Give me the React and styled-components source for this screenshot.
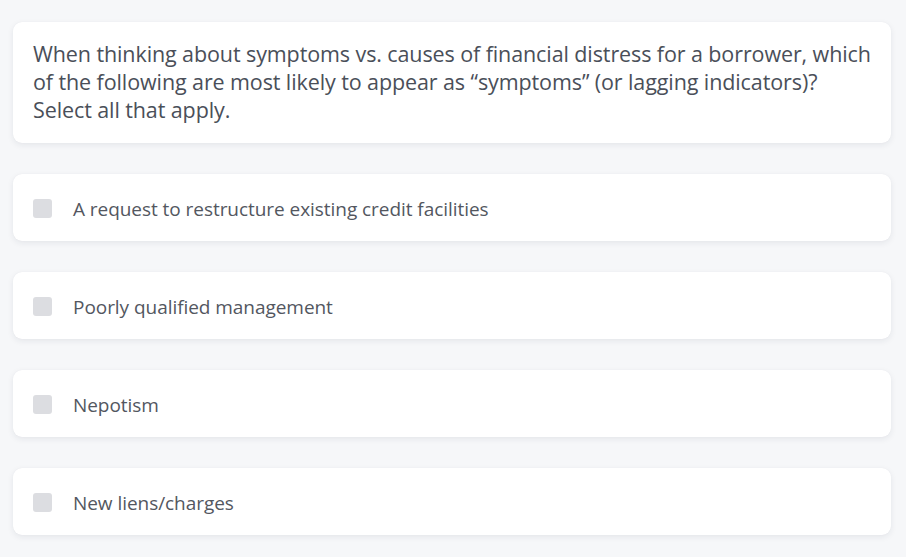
import React from "react";
import styled, { createGlobalStyle } from "styled-components";

const Global = createGlobalStyle`
  html, body { margin: 0; padding: 0; background: #f6f7f9; }
  body { font-family: "Open Sans", "Noto Sans", sans-serif; }
`;

const Page = styled.div`
  display: flex;
  flex-direction: column;
  gap: 31px;
  padding: 22px 15px 24px 13px;
`;

const Card = styled.div`
  background: #ffffff;
  border-radius: 9px;
  box-shadow: 0 2px 6px rgba(30, 40, 60, 0.08), 0 0 1px rgba(30, 40, 60, 0.06);
`;

const QuestionCard = styled(Card)`
  padding: 18px 20px 19px 20px;
`;

const QuestionText = styled.p`
  margin: 0;
  font-size: 21.5px;
  line-height: 28px;
  color: #4a4f59;
  letter-spacing: -0.1px;
`;

const OptionCard = styled(Card)`
  display: flex;
  align-items: center;
  gap: 21px;
  height: 67px;
  padding: 0 20px;
  box-sizing: border-box;
`;

const Box = styled.span`
  width: 19px;
  height: 19px;
  margin-top: 1px;
  border-radius: 3px;
  background: #dcdde1;
  flex-shrink: 0;
`;

const OptionText = styled.span`
  font-size: 19px;
  padding-top: 2px;
  color: #53575f;
  letter-spacing: -0.05px;
`;

const options = [
  "A request to restructure existing credit facilities",
  "Poorly qualified management",
  "Nepotism",
  "New liens/charges",
];

export default function App() {
  return (
    <>
      <Global />
      <Page>
        <QuestionCard>
          <QuestionText>
            When thinking about symptoms vs. causes of financial distress for a borrower, which
            of the following are most likely to appear as “symptoms” (or lagging indicators)?
            Select all that apply.
          </QuestionText>
        </QuestionCard>
        {options.map((o) => (
          <OptionCard key={o}>
            <Box />
            <OptionText>{o}</OptionText>
          </OptionCard>
        ))}
      </Page>
    </>
  );
}
